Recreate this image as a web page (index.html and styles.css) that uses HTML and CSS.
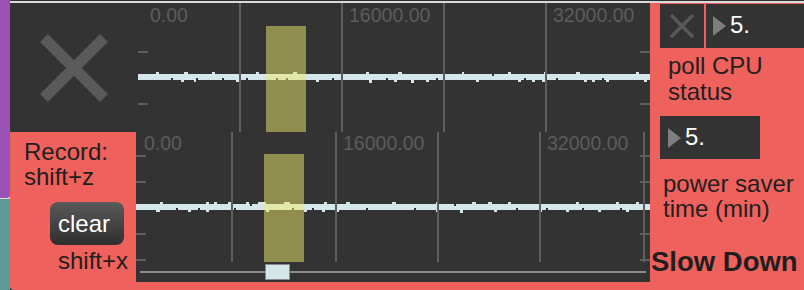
FILE: index.html
```html
<!DOCTYPE html>
<html>
<head>
<meta charset="utf-8">
<link rel="stylesheet" href="styles.css">
</head>
<body>
<div class="app">
  <div class="side">
    <div class="purple"></div>
    <div class="teal"></div>
  </div>
  <div class="main">
    <div class="topline"></div>
    <div class="board">
      <div class="bigx">
        <svg width="126" height="129" viewBox="0 0 126 129">
          <path class="xmark" d="M34 35L94 95M94 35L34 95"/>
        </svg>
      </div>
      <div class="scope scope1">
        <svg width="514" height="129" viewBox="0 0 514 129">
          <path class="sig" d="M2 71h512v6H2z
            M20 69h3v2h-3z M48 69h4v2h-4z M76 69h3v2h-3z M120 69h3v2h-3z M157 69h4v2h-4z M230 69h3v2h-3z M262 69h4v2h-4z M372 69h3v2h-3z M408 69h3v2h-3z M440 69h4v2h-4z M500 69h3v2h-3z M326 69h2v2h-2z
            M45 77h3v2h-3z M58 77h2v2h-2z M100 77h3v2h-3z M180 77h3v2h-3z M233 77h3v3h-3z M258 77h3v2h-3z M275 77h3v3h-3z M290 77h3v2h-3z M340 77h3v2h-3z M382 77h3v2h-3z M396 77h3v2h-3z M406 77h3v2h-3z M448 77h3v2h-3z M456 77h3v2h-3z M470 77h3v2h-3z M508 77h3v2h-3z"/>
          <path class="speck" d="M35 75h2v2h-2z M60 75h2v2h-2z M86 75h2v2h-2z M110 75h2v2h-2z M140 75h2v2h-2z M150 75h2v2h-2z M196 75h2v2h-2z M250 75h2v2h-2z M300 75h2v2h-2z M356 71h2v2h-2z M388 75h2v2h-2z M420 75h2v2h-2z M466 75h2v2h-2z"/>
          <rect class="hl" x="130" y="23" width="40" height="106"/>
          <g class="grid">
            <line x1="104" y1="0" x2="104" y2="129"/>
            <line x1="206" y1="0" x2="206" y2="129"/>
            <line x1="308" y1="0" x2="308" y2="129"/>
            <line x1="410" y1="0" x2="410" y2="129"/>
            <line x1="2" y1="49" x2="12" y2="49"/>
            <line x1="2" y1="101" x2="12" y2="101"/>
            <line x1="504" y1="49" x2="514" y2="49"/>
            <line x1="504" y1="101" x2="514" y2="101"/>
          </g>
          <text class="axis" x="14" y="19">0.00</text>
          <text class="axis" x="213" y="19">16000.00</text>
          <text class="axis" x="417" y="19">32000.00</text>
        </svg>
      </div>
      <div class="right">
        <div class="ctrlrow">
          <div class="xbtn">
            <svg width="44" height="44" viewBox="0 0 44 44">
              <path class="smallx" d="M11 11L33 33M33 11L11 33"/>
            </svg>
          </div>
          <div class="numbox">
            <span class="tri"></span><span class="num">5.</span>
          </div>
        </div>
        <div class="label label-poll">poll CPU<br>status</div>
        <div class="numbox numbox2">
          <span class="tri"></span><span class="num">5.</span>
        </div>
        <div class="label label-power">power saver<br>time (min)</div>
        <div class="slow">Slow Down</div>
      </div>
      <div class="record">
        <div class="label">Record:<br>shift+z</div>
        <div class="clear">clear</div>
        <div class="label shiftx">shift+x</div>
      </div>
      <div class="scope scope2">
        <svg width="514" height="150" viewBox="0 0 514 150">
          <path class="sig" d="M0 72h514v6H0z
            M24 70h3v2h-3z M70 70h3v2h-3z M78 70h3v2h-3z M92 70h3v2h-3z M110 70h3v2h-3z M122 70h8v2h-8z M148 70h6v2h-6z M188 70h3v2h-3z M210 70h4v2h-4z M212 70h2v2h-2z M256 70h4v2h-4z M300 70h3v2h-3z M336 70h4v2h-4z M352 70h4v2h-4z M372 70h3v2h-3z M440 70h3v2h-3z M480 70h3v2h-3z M500 70h3v2h-3z
            M20 78h4v2h-4z M52 78h3v2h-3z M70 78h3v2h-3z M130 78h3v2h-3z M168 78h3v2h-3z M186 78h3v2h-3z M200 78h3v2h-3z M300 78h3v2h-3z M324 78h3v3h-3z M358 78h3v2h-3z M403 78h3v2h-3z M430 78h3v2h-3z M462 78h3v2h-3z M490 78h3v2h-3z"/>
          <path class="speck" d="M40 76h2v2h-2z M62 76h2v2h-2z M98 76h2v2h-2z M114 72h2v2h-2z M156 76h2v2h-2z M176 76h2v2h-2z M230 76h2v2h-2z M278 76h2v2h-2z M318 72h2v2h-2z M380 76h2v2h-2z M410 76h2v2h-2z M446 76h2v2h-2z M484 76h2v2h-2z"/>
          <rect class="hl" x="128" y="22" width="40" height="108"/>
          <g class="grid">
            <line x1="96" y1="0" x2="96" y2="130"/>
            <line x1="200" y1="0" x2="200" y2="130"/>
            <line x1="302" y1="0" x2="302" y2="130"/>
            <line x1="404" y1="0" x2="404" y2="130"/>
            <line x1="508" y1="0" x2="508" y2="130"/>
            <line x1="0" y1="24" x2="10" y2="24"/>
            <line x1="0" y1="50" x2="10" y2="50"/>
            <line x1="0" y1="102" x2="10" y2="102"/>
            <line x1="0" y1="128" x2="10" y2="128"/>
            <line x1="504" y1="24" x2="514" y2="24"/>
            <line x1="504" y1="50" x2="514" y2="50"/>
            <line x1="504" y1="102" x2="514" y2="102"/>
            <line x1="504" y1="128" x2="514" y2="128"/>
          </g>
          <text class="axis" x="8" y="18">0.00</text>
          <text class="axis" x="207" y="18">16000.00</text>
          <text class="axis" x="411" y="18">32000.00</text>
          <line class="track" x1="4" y1="140" x2="510" y2="140"/>
          <rect class="thumb" x="129.5" y="132.5" width="24" height="15"/>
        </svg>
      </div>
    </div>
  </div>
</div>
</body>
</html>
```

FILE: styles.css
```css
html, body {
  margin: 0;
  padding: 0;
  background: #333333;
}

.app {
  display: flex;
  width: 804px;
  height: 290px;
  overflow: hidden;
  font-family: "Liberation Sans", Arial, sans-serif;
}

.side {
  width: 10px;
  display: flex;
  flex-direction: column;
  background: #dcdcdc;
}

.purple {
  height: 198px;
  background: #9a52b6;
  border-bottom-right-radius: 3px;
}

.teal {
  flex: 1;
  margin-top: 1px;
  background: #5e9a95;
}

.main {
  flex: 1;
  display: flex;
  flex-direction: column;
}

.topline {
  height: 2px;
  border-top: 1px solid #2e2e2e;
  background: #d9d9d9;
}

.board {
  flex: 1;
  display: grid;
  grid-template-columns: 126px 514px 154px;
  grid-template-rows: 129px 150px 8px;
  background: #ef615c;
  border-bottom-left-radius: 4px;
}

.bigx {
  grid-column: 1;
  grid-row: 1;
  background: #333333;
}

.bigx svg, .scope svg, .xbtn svg {
  display: block;
}

.xmark {
  stroke: #5a5a5a;
  stroke-width: 11;
  fill: none;
}

.scope {
  background: #333333;
}

.scope1 {
  grid-column: 2;
  grid-row: 1;
}

.scope2 {
  grid-column: 2;
  grid-row: 2;
}

.sig {
  fill: #d4e7eb;
}

.speck {
  fill: #333333;
}

.hl {
  fill: rgb(237, 233, 105);
  opacity: 0.5;
}

.grid line {
  stroke: #5e5e5e;
  stroke-width: 2;
}

.axis {
  font-family: "Liberation Sans", Arial, sans-serif;
  font-size: 19.5px;
  fill: #5c5c5c;
}

.track {
  stroke: #8a8a8a;
  stroke-width: 2;
}

.thumb {
  fill: #d3e6ea;
  stroke: #8c8c8c;
  stroke-width: 1;
}

.right {
  grid-column: 3;
  grid-row: 1 / 4;
  display: flex;
  flex-direction: column;
  align-items: flex-start;
  padding-left: 10px;
}

.ctrlrow {
  display: flex;
  gap: 2px;
  margin-top: 1px;
  height: 44px;
  align-self: stretch;
}

.xbtn {
  width: 44px;
  background: #333333;
}

.smallx {
  stroke: #585858;
  stroke-width: 3.5;
  fill: none;
}

.numbox {
  flex: 1;
  display: flex;
  align-items: center;
  padding-left: 7px;
  background: #333333;
}

.numbox2 {
  flex: none;
  width: 92px;
  height: 43px;
  padding-left: 8px;
  margin-top: 11px;
}

.tri {
  width: 0;
  height: 0;
  border-top: 10px solid transparent;
  border-bottom: 10px solid transparent;
  border-left: 13px solid #7e7e7e;
  margin-right: 4px;
}

.num {
  color: #ffffff;
  font-size: 24px;
  line-height: 26px;
  margin-top: -2px;
}

.label {
  font-size: 24px;
  line-height: 26px;
  color: #1f1f1f;
}

.label-poll {
  margin-left: 8px;
  margin-top: 5px;
}

.label-power {
  margin-left: 3px;
  margin-top: 12px;
  line-height: 25px;
}

.slow {
  margin-left: -9px;
  margin-top: 26px;
  font-size: 27.5px;
  line-height: 30px;
  font-weight: bold;
  color: #1f1f1f;
  white-space: nowrap;
}

.record {
  grid-column: 1;
  grid-row: 2;
  display: flex;
  flex-direction: column;
  align-items: flex-start;
  padding-top: 7px;
  padding-left: 14px;
}

.record .label {
  line-height: 25px;
}

.clear {
  margin-top: 13px;
  margin-left: 26px;
  width: 66px;
  height: 43px;
  padding-left: 8px;
  border-radius: 8px;
  background: linear-gradient(#5a5a5a, #2e2e2e);
  color: #ffffff;
  font-size: 24px;
  line-height: 43px;
}

.record .shiftx {
  margin-top: 3px;
  margin-left: 34px;
}
```
